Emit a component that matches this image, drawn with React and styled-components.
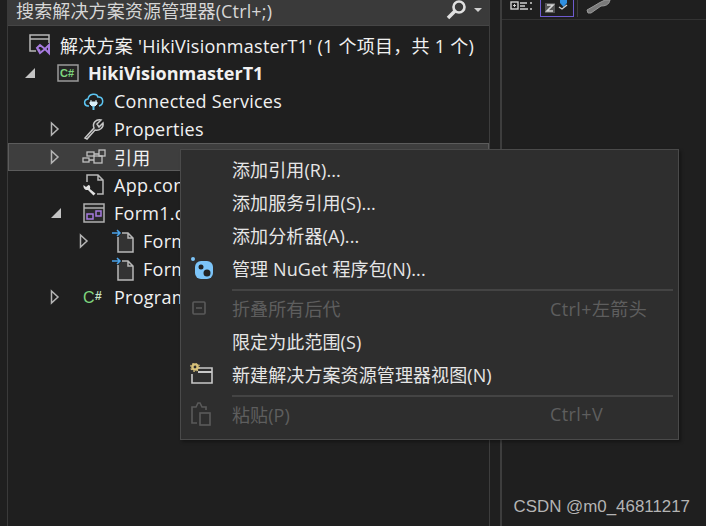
import React from "react";
import styled, { createGlobalStyle } from "styled-components";

const Global = createGlobalStyle`
  html, body { margin: 0; padding: 0; height: 100%; background: #1f1f1f; overflow: hidden; }
  #root { height: 100%; }
`;

const FONT = `"Open Sans", "Noto Sans CJK SC", sans-serif`;

const Page = styled.div`
  position: relative;
  width: 706px;
  height: 526px;
  display: flex;
  background: #1f1f1f;
  font-family: ${FONT};
  color: #f1f1f1;
  overflow: hidden;
`;
const LeftEdge = styled.div`
  width: 7px;
  border-right: 1px solid #3a3a3a;
`;
const Explorer = styled.div`
  width: 481px;
  border-right: 1px solid #3d3d3d;
  display: flex;
  flex-direction: column;
`;
const Gutter = styled.div`
  width: 10px;
  border-right: 2px solid #3d3d3d;
`;
const RightPane = styled.div`
  flex: 1;
`;
const PropToolbar = styled.div`
  height: 20px;
  box-sizing: border-box;
  border-bottom: 1px solid #333;
  display: flex;
  align-items: flex-start;
  padding-left: 8px;
  gap: 3px;
`;
const SortButton = styled.div`
  width: 32px;
  height: 16px;
  margin-left: 3px;
  border: 1px solid #6e5bd0;
  border-top: none;
  display: flex;
  justify-content: center;
`;
const ToolSep = styled.div`
  width: 1px;
  height: 17px;
  margin-right: 4px;
  background: #3d3d3d;
`;
const SearchBar = styled.div`
  height: 26px;
  box-sizing: border-box;
  background: #3a3a3a;
  border-bottom: 1px solid #454545;
  display: flex;
  align-items: center;
  padding: 0 7px 6px 8px;
  font-size: 18px;
  letter-spacing: 0.15px;
  color: #d6d6d6;
`;
const SearchLabel = styled.span`
  flex: 1;
  white-space: nowrap;
`;
const Caret = styled.span`
  width: 0;
  height: 0;
  margin-left: 6px;
  border-left: 4px solid transparent;
  border-right: 4px solid transparent;
  border-top: 4px solid #d0d0d0;
`;
const Tree = styled.div`
  padding-top: 5px;
  display: flex;
  flex-direction: column;
`;
const Row = styled.div`
  height: 28px;
  box-sizing: border-box;
  display: flex;
  align-items: center;
  white-space: nowrap;
  font-size: 18px;
  padding: 0 0 1px ${(p) => p.$indent}px;
  font-weight: ${(p) => (p.$bold ? 700 : 400)};
  letter-spacing: ${(p) => (p.$bold ? 0 : 0.26)}px;
  ${(p) => p.$selected && `
    background: #3e3e3e;
    border: 1px solid #5c5c5c;
  `}
`;
const Arrow = styled.span`
  width: ${(p) => p.$width || 24}px;
  flex: none;
  display: flex;
  align-items: center;
`;
const IconSlot = styled.span`
  width: 40px;
  flex: none;
  display: flex;
  align-items: center;
  justify-content: center;
`;
const Menu = styled.div`
  position: absolute;
  left: 180px;
  top: 149px;
  width: 497px;
  height: 285px;
  background: #2e2e2e;
  border: 1px solid #4a4a4a;
  box-shadow: 2px 2px 3px rgba(0, 0, 0, 0.35);
  padding-top: 4px;
  font-size: 18px;
  letter-spacing: 0.1px;
`;
const Item = styled.div`
  height: 33px;
  box-sizing: border-box;
  padding-bottom: 3px;
  display: flex;
  align-items: center;
  white-space: nowrap;
  color: ${(p) => (p.$disabled ? "#5e5e5e" : "#e6e6e6")};
`;
const MenuIcon = styled.span`
  width: 51px;
  flex: none;
  padding-left: 9px;
  box-sizing: border-box;
  display: flex;
  align-items: center;
`;
const ItemLabel = styled.span`
  flex: 1;
`;
const Shortcut = styled.span`
  width: 128px;
  flex: none;
  letter-spacing: 0.4px;
`;
const Separator = styled.div`
  height: 2px;
  margin: 3px 5px 2px 51px;
  background: #444;
`;
const Watermark = styled.div`
  position: absolute;
  right: 16px;
  bottom: 9px;
  font-family: "Liberation Sans", sans-serif;
  font-size: 16.9px;
  color: #b4b4b4;
`;

const Expand = () => (
  <svg width="10" height="16" viewBox="0 0 10 16"><path d="M1.5 2 L8 8 L1.5 14 Z" fill="none" stroke="#b5b5b5" strokeWidth="1.5" /></svg>
);
const Collapse = () => (
  <svg width="12" height="12" viewBox="0 0 12 12"><path d="M11 1 V11 H1 Z" fill="#c4c4c4" /></svg>
);
const SolutionIcon = () => (
  <svg width="22" height="22" viewBox="0 0 22 22">
    <path d="M7 17 H1 V1 H20 V9 M1 5 H20" fill="none" stroke="#b8b8b8" strokeWidth="1.5" />
    <path d="M8 14 L11 11 L16 15 L20 11 V19 L16 15 L11 19 Z M8 14 L11 17" fill="none" stroke="#a77be0" strokeWidth="2" />
  </svg>
);
const CsProjectIcon = () => (
  <svg width="22" height="18" viewBox="0 0 22 18">
    <rect x="1" y="1" width="20" height="16" fill="#252525" stroke="#9a9a9a" strokeWidth="1.5" />
    <text x="3" y="13" fontFamily="Liberation Sans" fontSize="11" fontWeight="700" fill="#7ed67e">C#</text>
  </svg>
);
const CloudIcon = () => (
  <svg width="22" height="20" viewBox="0 0 22 20">
    <path d="M6 15 H5 C1 15 0 9 5 8 C6 2 14 2 15 6 C20 5 22 13 16 15" fill="none" stroke="#5cc5f2" strokeWidth="1.5" />
    <path d="M8 9 V11 M13 9 V11 M7 11 H14 V13 L12 15 H9 L7 13 Z" fill="#d8f0fa" stroke="#d8f0fa" />
    <path d="M10.5 15 V19" stroke="#5cc5f2" strokeWidth="2" />
  </svg>
);
const WrenchIcon = () => (
  <svg width="22" height="22" viewBox="0 0 22 22">
    <path d="M2 20 L11 10 C9 5 13 1 18 2 L14 6 L16 9 L20 5 C21 10 16 13 12 12 L4 21 Z" fill="#2a2a2a" stroke="#c8c8c8" strokeWidth="1.5" />
  </svg>
);
const RefIcon = () => (
  <svg width="24" height="16" viewBox="0 0 24 16" fill="none" stroke="#c0c0c0" strokeWidth="1.3">
    <rect x="1" y="9" width="6" height="4" />
    <rect x="5" y="3" width="7" height="4" />
    <rect x="12" y="7" width="8" height="7" />
    <rect x="17" y="1" width="6" height="6" />
    <path d="M7 11 H12 M12 5 H17" />
  </svg>
);
const ConfigIcon = () => (
  <svg width="22" height="22" viewBox="0 0 22 22">
    <path d="M4 8 V1 H15 L20 6 V20 H14 M15 1 V6 H20" fill="none" stroke="#b8b8b8" strokeWidth="1.5" />
    <path d="M0.5 11 L3 13 L5.5 11 C7 11 7.5 13 7 15 L12.5 19.5 L10.5 21.5 L5 16 C2 16.5 0 14 0.5 11 Z" fill="#e0e0e0" />
  </svg>
);
const FormIcon = () => (
  <svg width="22" height="20" viewBox="0 0 22 20">
    <rect x="1" y="1" width="20" height="18" fill="#2a2a2a" stroke="#b0b0b0" strokeWidth="1.5" />
    <path d="M1 5 H21" stroke="#b0b0b0" strokeWidth="1.5" />
    <rect x="4" y="11" width="6" height="5" fill="none" stroke="#a77be0" strokeWidth="1.5" />
    <rect x="13" y="8" width="5" height="5" fill="none" stroke="#a77be0" strokeWidth="1.5" />
  </svg>
);
const LinkedFileIcon = () => (
  <svg width="22" height="24" viewBox="0 0 22 24">
    <path d="M6 8 V23 H21 V9 L16 4 H10 M16 4 V9 H21" fill="#333" stroke="#b8b8b8" strokeWidth="1.5" />
    <path d="M0 4 H8 M5 1 L8 4 L5 7" fill="none" stroke="#4aa3ea" strokeWidth="1.5" />
  </svg>
);
const CsFileIcon = () => (
  <svg width="24" height="16" viewBox="0 0 24 16">
    <text x="1" y="14" fontFamily="Liberation Sans" fontSize="16" fill="#7ed67e">C</text>
    <text x="13" y="11" fontFamily="Liberation Sans" fontSize="12" fontWeight="700" fill="#c8e6c8">#</text>
  </svg>
);
const NugetIcon = () => (
  <svg width="24" height="24" viewBox="0 0 24 24">
    <circle cx="3" cy="3" r="2" fill="#7cc4f8" />
    <rect x="5" y="5" width="18" height="18" rx="6" fill="#7cc4f8" />
    <circle cx="11" cy="11" r="2.5" fill="#222" />
    <circle cx="17" cy="17" r="3.5" fill="#222" />
  </svg>
);
const CollapseAllIcon = () => (
  <svg width="18" height="18" viewBox="0 0 18 18" fill="none" stroke="#5a5a5a" strokeWidth="1.6">
    <rect x="3" y="3" width="12" height="12" rx="1" />
    <path d="M6 9 H12" />
  </svg>
);
const NewViewIcon = () => (
  <svg width="24" height="22" viewBox="0 0 24 22">
    <path d="M8 5 H22 V20 H2 V11" fill="none" stroke="#c8c8c8" strokeWidth="1.6" />
    <path d="M8 9 H22" stroke="#c8c8c8" strokeWidth="2" />
    <circle cx="5" cy="4" r="2.6" fill="#2e2e2e" stroke="#d8c27a" strokeWidth="2.4" />
    <circle cx="5" cy="4" r="4.3" fill="none" stroke="#d8c27a" strokeWidth="1.2" strokeDasharray="1.6 1.8" />
  </svg>
);
const PasteIcon = () => (
  <svg width="22" height="26" viewBox="0 0 22 26" fill="none" stroke="#5a5a5a" strokeWidth="1.6">
    <path d="M7 22 H2 V6 H6 L8 2 L10 2 L12 6 H16 V9" />
    <rect x="10" y="12" width="10" height="12" />
  </svg>
);
const SearchIcon = () => (
  <svg width="23" height="20" viewBox="0 0 23 20" fill="none" stroke="#e0e0e0">
    <circle cx="14" cy="7" r="5.5" strokeWidth="2.6" />
    <path d="M10 11 L3 18" strokeWidth="3.6" />
  </svg>
);
const TreeToolsIcon = () => (
  <svg width="24" height="12" viewBox="0 0 24 12">
    <rect x="1" y="2" width="7" height="7" fill="none" stroke="#d0d0d0" strokeWidth="1.4" />
    <path d="M3 5.5 H6 M4.5 4 V7" stroke="#d0d0d0" />
    <path d="M10 3 H17 M10 6 H15 M10 9 H18 M20 3 H22 M20 9 H22" stroke="#d0d0d0" strokeWidth="1.4" />
  </svg>
);
const SortIcon = () => (
  <svg width="26" height="14" viewBox="0 0 26 14">
    <path d="M1 3 H11 V13 H1 Z" fill="#555" />
    <path d="M3 5 H9 L3 11 H9" fill="none" stroke="#d8d8d8" strokeWidth="1.6" />
    <path d="M16 0 H23 V3 L19.5 7 L16 3 Z" fill="#2f8fe0" />
    <path d="M15 7 L18 9 L23 5" fill="none" stroke="#d0d0d0" strokeWidth="1.4" />
  </svg>
);
const KeyIcon = () => (
  <svg width="26" height="14" viewBox="0 0 26 14">
    <path d="M2 10 L9 6 L14 3 L20 0 H25 C24 5 20 6 16 6 L6 13 H3 Z" fill="#7a7a7a" stroke="#9a9a9a" />
  </svg>
);

const rows = [
  { indent: 0, arrowWidth: 12, icon: <SolutionIcon />, label: "解决方案 'HikiVisionmasterT1' (1 个项目，共 1 个)" },
  { indent: 16, arrow: <Collapse />, icon: <CsProjectIcon />, label: "HikiVisionmasterT1", bold: true },
  { indent: 42, icon: <CloudIcon />, label: "Connected Services" },
  { indent: 42, arrow: <Expand />, icon: <WrenchIcon />, label: "Properties" },
  { indent: 41, arrow: <Expand />, icon: <RefIcon />, label: "引用", selected: true },
  { indent: 42, icon: <ConfigIcon />, label: "App.config" },
  { indent: 42, arrow: <Collapse />, icon: <FormIcon />, label: "Form1.cs" },
  { indent: 71, arrow: <Expand />, icon: <LinkedFileIcon />, label: "Form1.De" },
  { indent: 71, icon: <LinkedFileIcon />, label: "Form1.re" },
  { indent: 42, arrow: <Expand />, icon: <CsFileIcon />, label: "Program.cs" },
];

const menu = [
  { label: "添加引用(R)..." },
  { label: "添加服务引用(S)..." },
  { label: "添加分析器(A)..." },
  { label: "管理 NuGet 程序包(N)...", icon: <NugetIcon /> },
  { sep: true },
  { label: "折叠所有后代", icon: <CollapseAllIcon />, keys: "Ctrl+左箭头", disabled: true },
  { label: "限定为此范围(S)" },
  { label: "新建解决方案资源管理器视图(N)", icon: <NewViewIcon /> },
  { sep: true },
  { label: "粘贴(P)", icon: <PasteIcon />, keys: "Ctrl+V", disabled: true },
];

export default function App() {
  return (
    <Page>
      <Global />
      <LeftEdge />
      <Explorer>
        <SearchBar>
          <SearchLabel>搜索解决方案资源管理器(Ctrl+;)</SearchLabel>
          <SearchIcon />
          <Caret />
        </SearchBar>
        <Tree>
          {rows.map((r) => (
            <Row key={r.label} $indent={r.indent} $bold={r.bold} $selected={r.selected}>
              <Arrow $width={r.arrowWidth}>{r.arrow}</Arrow>
              <IconSlot>{r.icon}</IconSlot>
              <span>{r.label}</span>
            </Row>
          ))}
        </Tree>
      </Explorer>
      <Gutter />
      <RightPane>
        <PropToolbar>
          <TreeToolsIcon />
          <SortButton><SortIcon /></SortButton>
          <ToolSep />
          <KeyIcon />
        </PropToolbar>
      </RightPane>
      <Menu>
        {menu.map((m, i) =>
          m.sep ? (
            <Separator key={i} />
          ) : (
            <Item key={m.label} $disabled={m.disabled}>
              <MenuIcon>{m.icon}</MenuIcon>
              <ItemLabel>{m.label}</ItemLabel>
              {m.keys ? <Shortcut>{m.keys}</Shortcut> : null}
            </Item>
          )
        )}
      </Menu>
      <Watermark>CSDN @m0_46811217</Watermark>
    </Page>
  );
}
